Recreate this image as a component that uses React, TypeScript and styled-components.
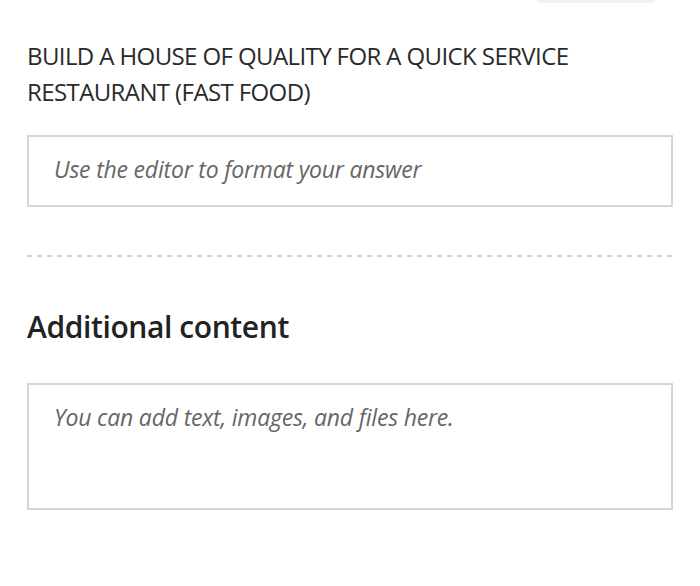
import React from "react";
import styled, { createGlobalStyle } from "styled-components";

const Global = createGlobalStyle`
  html, body { margin: 0; padding: 0; background: #fff; }
  body { font-family: "Open Sans", "Liberation Sans", sans-serif; }
`;

const Page = styled.div`
  width: 700px;
  height: 586px;
  box-sizing: border-box;
  padding: 0 27px;
  display: flex;
  flex-direction: column;
  position: relative;
`;

const TopEdge = styled.div`
  position: absolute;
  top: 0;
  left: 537px;
  width: 118px;
  height: 3px;
  background: #f2f2f2;
  border-radius: 0 0 3px 3px;
`;

const Question = styled.h1`
  margin: 38px 0 0;
  font-size: 24px;
  line-height: 36px;
  font-weight: 400;
  color: #2a2a2a;
  letter-spacing: -0.6px;
`;

const EditorBox = styled.div<{ $h: number }>`
  box-sizing: border-box;
  height: ${(p) => p.$h}px;
  border: 2px solid #d6d6d6;
  padding: 17px 25px;
  font-style: italic;
  font-size: 23px;
  line-height: 30px;
  color: #666;
  letter-spacing: -0.2px;
`;

const AnswerBox = styled(EditorBox)`
  margin-top: 25px;
`;

const Divider = styled.div`
  margin-top: 48px;
  height: 2px;
  background: repeating-linear-gradient(
    to right,
    #d2d2d2 0 5px,
    transparent 5px 10px
  );
`;

const SectionTitle = styled.h2`
  margin: 52px 0 0;
  font-size: 30px;
  line-height: 36px;
  font-weight: 600;
  color: #222;
  letter-spacing: -0.4px;
`;

const ExtraBox = styled(EditorBox)`
  margin-top: 38px;
`;

export default function App() {
  return (
    <>
      <Global />
      <Page>
        <TopEdge />
        <Question>
          BUILD A HOUSE OF QUALITY FOR A QUICK SERVICE RESTAURANT (FAST FOOD)
        </Question>
        <AnswerBox $h={72}>Use the editor to format your answer</AnswerBox>
        <Divider />
        <SectionTitle>Additional content</SectionTitle>
        <ExtraBox $h={127}>You can add text, images, and files here.</ExtraBox>
      </Page>
    </>
  );
}
